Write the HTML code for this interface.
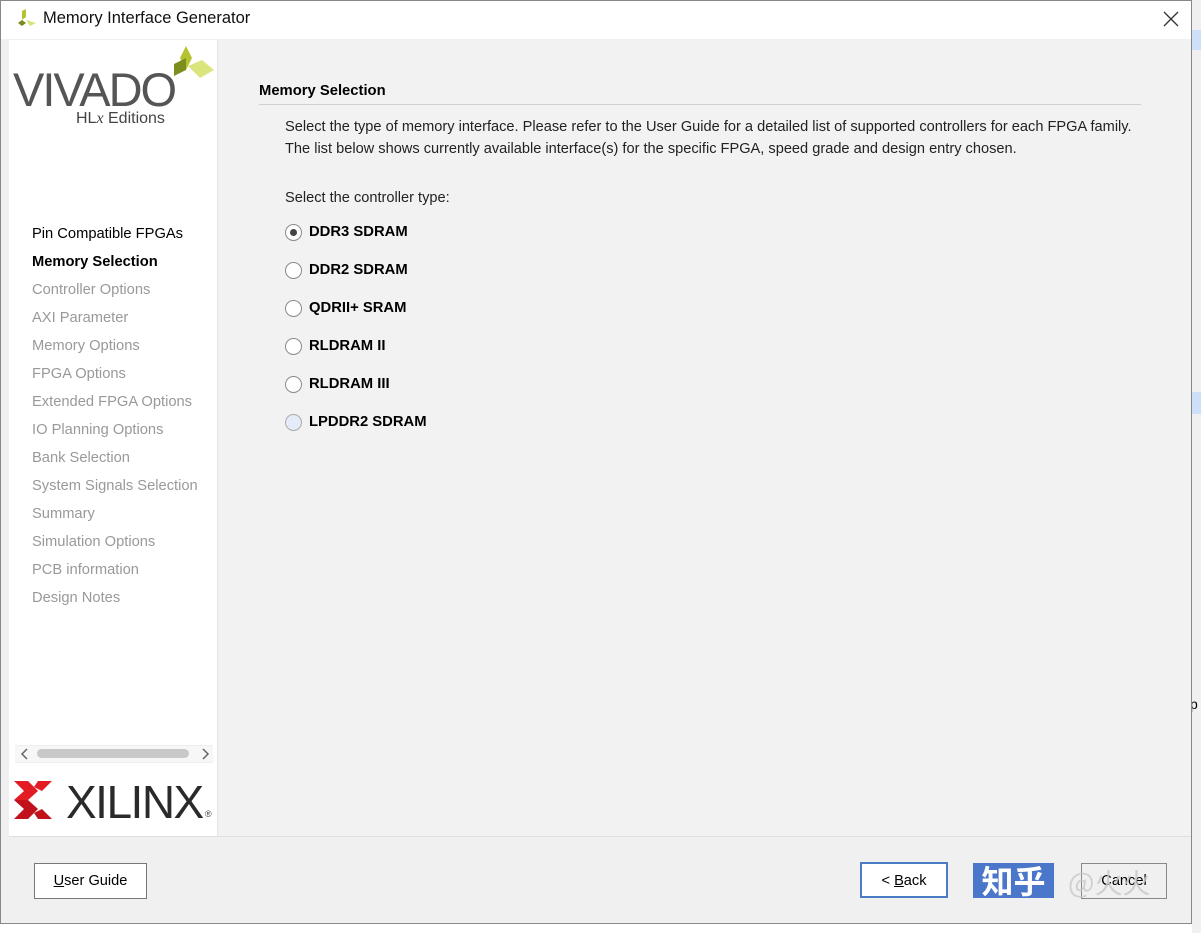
<!DOCTYPE html>
<html><head><meta charset="utf-8"><style>
*{margin:0;padding:0;box-sizing:border-box}
body{width:1201px;height:933px;position:relative;overflow:hidden;background:#fff;font-family:"Liberation Sans",Arial,sans-serif;font-size:14.6px;color:#000}
.abs{position:absolute}
#dlg{left:0;top:0;width:1192px;height:924px;border:1px solid #888;background:#f0f0f0}
#title{left:1px;top:1px;width:1190px;height:38px;background:#fff}
#left{left:9px;top:40px;width:209px;height:796px;background:#fff;border-right:1px solid #e6e6e6}
#main{left:219px;top:40px;width:971px;height:796px;background:#f2f2f2}
.nav{position:absolute;left:32px;font-size:14.7px;color:#999}
.r{position:absolute;left:285px;width:17px;height:17px;border:1px solid #8a8a8a;border-radius:50%;background:#fff}
.rl{position:absolute;left:309px;font-weight:bold;font-size:14.8px}
.btn{position:absolute;height:36px;border:1px solid #999;background:#fff;font-size:14.6px;text-align:center;line-height:34px}
</style></head><body>
<div class="abs" style="left:1192px;top:0;width:9px;height:933px;background:#f0f0f0"></div>
<div class="abs" style="left:1192px;top:30px;width:9px;height:20px;background:#cde0f7"></div>
<div class="abs" style="left:1192px;top:392px;width:9px;height:22px;background:#cde0f7"></div>
<div class="abs" style="left:1190px;top:696px;font-size:14px">p</div>
<div id="dlg" class="abs"></div>
<div id="title" class="abs"></div>
<svg class="abs" style="left:16px;top:9px" width="22" height="20"><polygon points="6,2 10,0 10,8 6,11" fill="#b3c431"/><polygon points="2,14 6,11 10,14 6,17" fill="#7a8d1c"/><polygon points="10,11 20,14 14,17" fill="#d9e27a"/></svg>
<div class="abs" style="left:43px;top:9px;font-size:16.5px;color:#111">Memory Interface Generator</div>
<svg class="abs" style="left:1163px;top:11px" width="16" height="16"><path d="M1 1L15 15M15 1L1 15" stroke="#333" stroke-width="1.3"/></svg>
<div id="left" class="abs"></div>
<div id="main" class="abs"></div>
<div class="abs" style="left:9px;top:836px;width:1182px;height:1px;background:#e0e0e0"></div>
<div class="abs" style="left:13px;top:62px;font-size:47px;color:#555;letter-spacing:-2px">VIVADO</div>
<svg class="abs" style="left:172px;top:46px" width="44" height="38"><polygon points="14,0 20,12 14,24 8,12" fill="#b4c32f"/><polygon points="2,18 14,12 14,24 2,30" fill="#7c8e1b"/><polygon points="16,20 30,14 42,24 28,32" fill="#dce57d"/></svg>
<div class="abs" style="left:76px;top:110px;font-size:16px;color:#444">HL<i style="font-family:'Liberation Serif',serif">x</i> Editions</div>
<div class="nav" style="top:226px;color:#000">Pin Compatible FPGAs</div>
<div class="nav" style="top:254px;color:#000;font-weight:bold">Memory Selection</div>
<div class="nav" style="top:282px">Controller Options</div>
<div class="nav" style="top:310px">AXI Parameter</div>
<div class="nav" style="top:338px">Memory Options</div>
<div class="nav" style="top:366px">FPGA Options</div>
<div class="nav" style="top:394px">Extended FPGA Options</div>
<div class="nav" style="top:422px">IO Planning Options</div>
<div class="nav" style="top:450px">Bank Selection</div>
<div class="nav" style="top:478px">System Signals Selection</div>
<div class="nav" style="top:506px">Summary</div>
<div class="nav" style="top:534px">Simulation Options</div>
<div class="nav" style="top:562px">PCB information</div>
<div class="nav" style="top:590px">Design Notes</div>
<div class="abs" style="left:15px;top:745px;width:198px;height:18px;background:#f7f7f7;border-top:1px solid #eee;border-bottom:1px solid #eee"></div>
<svg class="abs" style="left:20px;top:748px" width="10" height="12"><path d="M7 1L2 6L7 11" stroke="#666" stroke-width="1.5" fill="none"/></svg>
<svg class="abs" style="left:200px;top:748px" width="10" height="12"><path d="M3 1L8 6L3 11" stroke="#666" stroke-width="1.5" fill="none"/></svg>
<div class="abs" style="left:37px;top:749px;width:152px;height:9px;border-radius:5px;background:#c8c8c8"></div>
<svg class="abs" style="left:14px;top:781px" width="38" height="38"><polygon points="0,0 14,0 24,10 14,19 0,19 10,10" fill="#e31b23"/><polygon points="0,19 14,19 24,28 14,38 0,38 10,28" fill="#c1121c"/><polygon points="24,0 38,0 28,10 20,6" fill="#e31b23"/><polygon points="20,32 28,28 38,38 24,38" fill="#c1121c"/></svg>
<div class="abs" style="left:66px;top:775px;font-size:46px;color:#2a2a2a;letter-spacing:-1.5px">XILINX</div>
<div class="abs" style="left:205px;top:809px;font-size:9px;color:#444">®</div>
<div class="abs" style="left:259px;top:83px;font-weight:bold;font-size:14.8px">Memory Selection</div>
<div class="abs" style="left:259px;top:104px;width:882px;height:1px;background:#d0d0d0"></div>
<div class="abs" style="left:285px;top:116px;line-height:22px;color:#222;font-size:14.6px">Select the type of memory interface. Please refer to the User Guide for a detailed list of supported controllers for each FPGA family.<br>The list below shows currently available interface(s) for the specific FPGA, speed grade and design entry chosen.</div>
<div class="abs" style="left:285px;top:190px;color:#222">Select the controller type:</div>
<div class="r" style="top:224px"><div style="position:absolute;left:4px;top:4px;width:7px;height:7px;border-radius:50%;background:#444"></div></div><div class="rl" style="top:224px">DDR3 SDRAM</div>
<div class="r" style="top:262px"></div><div class="rl" style="top:262px">DDR2 SDRAM</div>
<div class="r" style="top:300px"></div><div class="rl" style="top:300px">QDRII+ SRAM</div>
<div class="r" style="top:338px"></div><div class="rl" style="top:338px">RLDRAM II</div>
<div class="r" style="top:376px"></div><div class="rl" style="top:376px">RLDRAM III</div>
<div class="r" style="top:414px;background:#e3ecf8;border-color:#aaa"></div><div class="rl" style="top:414px">LPDDR2 SDRAM</div>
<div class="btn" style="left:34px;top:863px;width:113px;border-color:#777"><u>U</u>ser Guide</div>
<div class="btn" style="left:860px;top:862px;width:88px;border:2px solid #4b7bc5">&lt; <u>B</u>ack</div>
<div class="abs" style="left:973px;top:863px;width:81px;height:35px;background:#4a77c9;color:#fff;font-size:32px;line-height:35px;text-align:center;font-family:'Noto Sans CJK SC',sans-serif;font-weight:bold">知乎</div>
<div class="btn" style="left:1081px;top:863px;width:86px;border-color:#888;background:transparent">Cancel</div>
<div class="abs" style="left:1068px;top:862px;font-size:28px;color:rgba(200,200,200,0.8);font-family:'Noto Sans CJK SC',sans-serif">@火火</div>
</body></html>
